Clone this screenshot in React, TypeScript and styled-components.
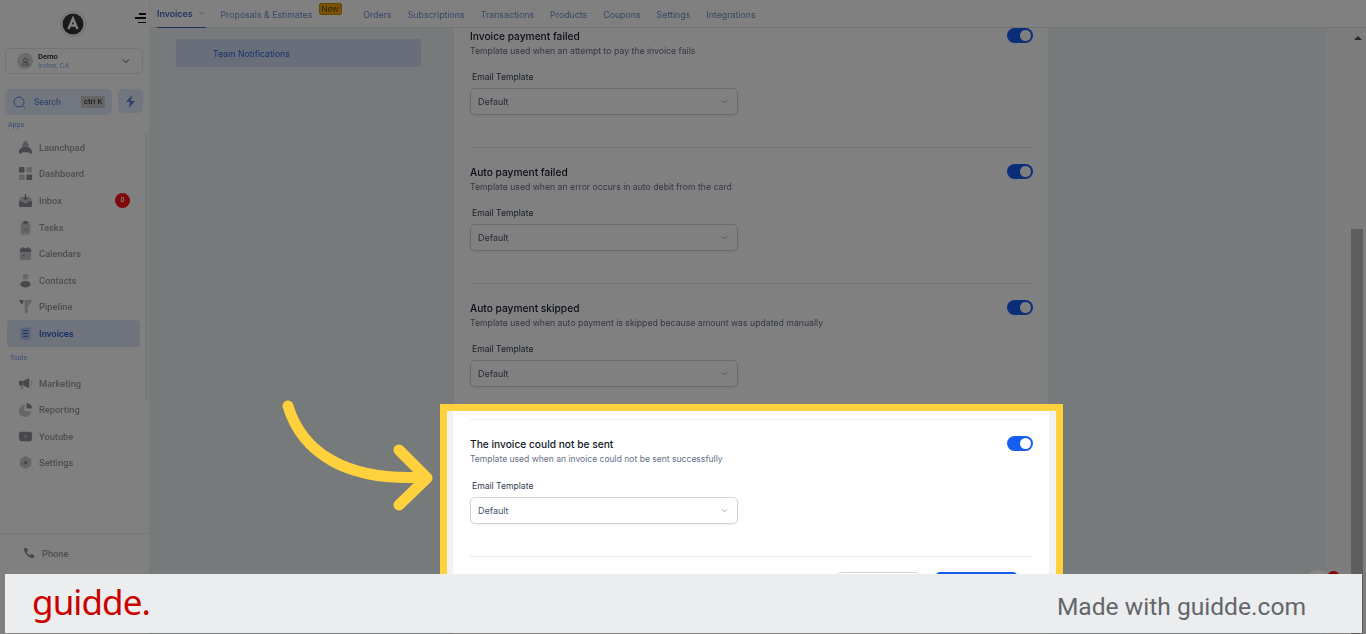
import React from "react";
import styled, { createGlobalStyle } from "styled-components";

const GlobalStyle = createGlobalStyle`
  html, body {
    margin: 0;
    padding: 0;
    background: #808080;
  }
  * {
    box-sizing: border-box;
  }
`;

const Stage = styled.div`
  position: relative;
  width: 1366px;
  height: 634px;
  overflow: hidden;
  font-family: Inter, "Liberation Sans", sans-serif;
`;

const Dimmed = styled.div`
  display: flex;
  width: 100%;
  height: 100%;
  filter: brightness(0.5) blur(0.45px);
`;

/* sidebar */
const Sidebar = styled.aside`
  position: relative;
  flex: 0 0 150px;
  height: 634px;
  display: flex;
  flex-direction: column;
  background: #ffffff;
  border-right: 1px solid #f2f2f2;
  font-family: Roboto, sans-serif;
`;

const SideThumb = styled.div`
  position: absolute;
  top: 134px;
  right: 1px;
  width: 3px;
  height: 266px;
  background: #f0f0f0;
`;

const LogoRow = styled.div`
  position: relative;
  height: 48px;
  display: flex;
  align-items: flex-start;
  justify-content: center;
  padding: 11px 4px 0 0;
`;

const Burger = styled.div`
  position: absolute;
  top: 13px;
  left: 135px;
  width: 11px;
  height: 10px;
  display: flex;
  flex-direction: column;
  align-items: flex-end;
  justify-content: space-between;
  span {
    display: block;
    height: 1.5px;
    background: #111;
  }
  span:nth-child(1) { width: 7px; }
  span:nth-child(2) { width: 11px; }
  span:nth-child(3) { width: 8px; }
`;

const Account = styled.div`
  margin-left: 5px;
  width: 138px;
  height: 26px;
  display: flex;
  align-items: center;
  padding: 0 11px;
  border: 1px solid #e6e6e6;
  border-radius: 5px;
`;

const Avatar = styled.div`
  width: 16px;
  height: 16px;
  border-radius: 50%;
  background: #d6d6d6;
  display: flex;
  align-items: center;
  justify-content: center;
`;

const AccountText = styled.div`
  margin-left: 5px;
  flex: 1;
  font-size: 7.5px;
  line-height: 9.5px;
  color: #111;
  font-weight: 500;
  small {
    display: block;
    font-size: 7.5px;
    font-weight: 400;
    color: #8fb0ee;
  }
`;

const SearchRow = styled.div`
  margin: 15px 0 0 5px;
  display: flex;
  gap: 6px;
`;

const SearchBox = styled.div`
  width: 107px;
  height: 26px;
  display: flex;
  align-items: center;
  padding: 0 7px 0 8px;
  border-radius: 5px;
  background: #e4ecfb;
  color: #6f90e0;
  font-size: 8.7px;
  font-weight: 500;
  span {
    margin-left: 8px;
    flex: 1;
  }
`;

const KeyHint = styled.kbd`
  width: 24px;
  height: 12px;
  background: #c9c9c9;
  color: #111;
  font: 400 8px/12px Roboto, sans-serif;
  text-align: center;
`;

const BoltButton = styled.div`
  width: 25px;
  height: 24px;
  border-radius: 5px;
  background: #e4ecfb;
  display: flex;
  align-items: center;
  justify-content: center;
`;

const GroupLabel = styled.div<{ $indent: number; $top: number }>`
  margin: ${(p) => p.$top}px 0 0 ${(p) => p.$indent}px;
  height: 10px;
  font-size: 7px;
  line-height: 10px;
  color: #6f95e8;
`;

const NavList = styled.nav<{ $top: number }>`
  margin-top: ${(p) => p.$top}px;
  display: flex;
  flex-direction: column;
`;

const NavItem = styled.div<{ $active?: boolean }>`
  position: relative;
  margin-left: 7px;
  width: 133px;
  height: 26.6px;
  display: flex;
  align-items: center;
  padding-left: 11px;
  border-radius: 4px;
  gap: 6px;
  font-size: 9.3px;
  font-weight: 500;
  color: ${(p) => (p.$active ? "#2c58c8" : "#9a9a9a")};
  background: ${(p) => (p.$active ? "#dbe5f8" : "transparent")};
`;

const CountBadge = styled.span`
  position: absolute;
  top: 5.5px;
  right: 10px;
  width: 15px;
  height: 15px;
  border-radius: 50%;
  background: #ff1010;
  color: #fff;
  font-size: 7px;
  line-height: 15px;
  text-align: center;
`;

const SideFooter = styled.div`
  margin-top: auto;
  height: 101px;
  border-top: 1px solid #ededed;
  padding: 9px 0 0 16px;
`;

const PhoneItem = styled.div`
  height: 20px;
  display: flex;
  align-items: center;
  gap: 7px;
  padding-left: 7px;
  font-size: 9.3px;
  font-weight: 500;
  color: #9a9a9a;
`;

/* main */
const Main = styled.div`
  position: relative;
  flex: 1;
  height: 634px;
  overflow: hidden;
  background: #edf3f4;
`;

const TopNav = styled.header`
  position: relative;
  z-index: 2;
  height: 28px;
  display: flex;
  align-items: center;
  padding-left: 7px;
  background: #ffffff;
  border-bottom: 1px solid #e4e4e4;
  font-size: 8.8px;
`;

const TopTab = styled.div<{ $active?: boolean; $after?: number }>`
  position: relative;
  height: 28px;
  display: flex;
  align-items: center;
  gap: 5px;
  padding-top: ${(p) => (p.$active ? 0 : 2)}px;
  margin-right: ${(p) => p.$after ?? 16}px;
  font-weight: ${(p) => (p.$active ? 600 : 400)};
  color: ${(p) => (p.$active ? "#3f68c8" : "#6f8fd0")};
  border-bottom: ${(p) => (p.$active ? "1px solid #3f68c8" : "none")};
`;

const NewTag = styled.span`
  position: absolute;
  top: 3px;
  left: 98px;
  width: 23px;
  height: 12px;
  background: #f2a60c;
  border: 1px solid #c98a06;
  border-radius: 2px;
  color: #5c4300;
  font-size: 8px;
  line-height: 10px;
  text-align: center;
`;

const Content = styled.div`
  display: flex;
  height: 606px;
`;

const SubMenu = styled.div`
  flex: 0 0 303px;
  padding: 11px 0 0 26px;
`;

const SubMenuItem = styled.div`
  width: 245px;
  height: 28px;
  padding-left: 37px;
  background: #cfdef6;
  color: #2f63cf;
  font-size: 8.7px;
  line-height: 30px;
  border-radius: 2px;
`;

const Card = styled.div`
  flex: 0 0 596px;
  margin-top: -16px;
  padding: 0 15px 0 16px;
  background: #ffffff;
  border-left: 1px solid #eceff1;
  border-right: 1px solid #eceff1;
`;

const Rail = styled.div`
  margin-left: auto;
  flex: 0 0 39px;
  display: flex;
  flex-direction: column;
  align-items: flex-end;
  background: #fafafa;
`;

const RailArrow = styled.div`
  margin: 8px 4px 0 0;
  width: 0;
  height: 0;
  border-left: 4px solid transparent;
  border-right: 4px solid transparent;
  border-bottom: 4px solid #505050;
`;

const RailThumb = styled.div`
  margin: 189px 3px 0 0;
  width: 12px;
  flex: 1;
  background: #bdbdbd;
`;

const SectionBox = styled.section`
  position: relative;
  height: 136px;
  padding-top: 17px;
  border-bottom: 1px solid #e8eaed;
`;

const SectionTitle = styled.h3`
  margin: 0;
  font-size: 10.2px;
  line-height: 14px;
  font-weight: 500;
  color: #101828;
`;

const SectionNote = styled.p`
  margin: 2px 0 0;
  font-size: 8.7px;
  line-height: 13px;
  color: #667085;
`;

const FieldLabel = styled.label`
  display: block;
  margin: 13px 0 0 2px;
  font-size: 8.6px;
  line-height: 12px;
  color: #344054;
`;

const Select = styled.div`
  margin-top: 5px;
  width: 268px;
  height: 27px;
  display: flex;
  align-items: center;
  justify-content: space-between;
  padding: 0 8px 0 7px;
  background: #ffffff;
  border: 1px solid #d0d5dd;
  border-radius: 5px;
  box-shadow: 0 1px 2px rgba(16, 24, 40, 0.08);
  color: #475467;
  font-size: 9px;
`;

const Toggle = styled.span`
  position: absolute;
  top: 16px;
  right: 0;
  width: 26px;
  height: 15px;
  border-radius: 8px;
  background: #155eef;
  &::after {
    content: "";
    position: absolute;
    top: 2px;
    right: 2px;
    width: 11px;
    height: 11px;
    border-radius: 50%;
    background: #ffffff;
  }
`;

/* spotlight over the dimmed page */
const Spotlight = styled.div`
  position: absolute;
  top: 404px;
  left: 440px;
  width: 623px;
  height: 182px;
  overflow: hidden;
  border: 7px solid #ffd13d;
  background: #eff3f6;
  padding: 0 7px 0 6px;
`;

const SpotCard = styled.div`
  height: 100%;
  padding: 8px 16px 0 17px;
  background: #ffffff;
`;

const SpotSection = styled(SectionBox)`
  border-top: 1px solid #eeeff1;
  height: 138px;
  ${SectionNote} {
    font-size: 8.55px;
  }
  ${FieldLabel} {
    margin-top: 14px;
  }
`;

const ButtonRow = styled.div`
  display: flex;
  justify-content: flex-end;
  gap: 15px;
  margin: 15px 15px 0 0;
`;

const ActionButton = styled.div<{ $primary?: boolean }>`
  width: ${(p) => (p.$primary ? 83 : 84)}px;
  height: 30px;
  border-radius: 5px;
  background: ${(p) => (p.$primary ? "#155eef" : "#ffffff")};
  border: 1px solid ${(p) => (p.$primary ? "#155eef" : "#d0d5dd")};
`;

const ArrowMark = styled.svg`
  position: absolute;
  top: 395px;
  left: 275px;
`;

const ChatBubble = styled.div`
  position: absolute;
  top: 570px;
  left: 1305px;
  width: 26px;
  height: 26px;
  border-radius: 50%;
  background: #878787;
`;

const ChatDot = styled.div`
  position: absolute;
  top: 571px;
  left: 1327px;
  width: 13px;
  height: 13px;
  border-radius: 50%;
  background: #8b0000;
`;

/* guidde strip */
const Footer = styled.footer`
  position: absolute;
  top: 574px;
  left: 5px;
  width: 1357px;
  height: 59px;
  display: flex;
  align-items: center;
  justify-content: space-between;
  padding: 0 56px 0 27px;
  background: #ecedef;
`;

const Brand = styled.div`
  margin-top: -3px;
  font-family: "Noto Sans", sans-serif;
  font-size: 35px;
  font-weight: 400;
  line-height: 56px;
  letter-spacing: -0.9px;
  color: #cb0000;
`;

const Credit = styled.div`
  margin-top: 6px;
  font-family: Roboto, sans-serif;
  font-size: 24.6px;
  color: #63666a;
`;

const Icon = ({ children, size = 15 }: { children: React.ReactNode; size?: number }) => (
  <svg width={size} height={size} viewBox="0 0 16 16" style={{ flex: "none" }}>
    {children}
  </svg>
);

const DARK = "#8b8f99";
const LIGHT = "#c9cbd0";

const icons: Record<string, React.ReactNode> = {
  Launchpad: (
    <>
      <path d="M8 0.5 C9.5 1.5 11.5 4.5 12 7 H4 C4.5 4.5 6.5 1.5 8 0.5 Z" fill="#aeb0b6" />
      <path d="M1 13 C1 10 4 7 8 7 C12 7 15 10 15 13 C15 15 12.5 15 11 13 H5 C3.5 15 1 15 1 13 Z" fill={DARK} />
    </>
  ),
  Dashboard: (
    <>
      <rect x="1" y="1" width="6" height="6" rx="1" fill={DARK} />
      <rect x="9" y="1" width="6" height="6" rx="1" fill={LIGHT} />
      <rect x="1" y="9" width="6" height="6" rx="1" fill={LIGHT} />
      <rect x="9" y="9" width="6" height="6" rx="1" fill={DARK} />
    </>
  ),
  Inbox: (
    <>
      <path d="M1 8 L3 4 H13 L15 8 V13 A2 2 0 0 1 13 15 H3 A2 2 0 0 1 1 13 Z" fill={LIGHT} />
      <path d="M1 9 H5 L6.5 11 H9.5 L11 9 H15 V13 A2 2 0 0 1 13 15 H3 A2 2 0 0 1 1 13 Z" fill={DARK} />
      <path d="M8 1 V7 M6 5 L8 7 L10 5" stroke={DARK} strokeWidth="1.4" fill="none" />
    </>
  ),
  Tasks: (
    <>
      <rect x="3" y="2.5" width="10" height="13" rx="2" fill={LIGHT} />
      <rect x="5.5" y="1" width="5" height="3" rx="1" fill={DARK} />
      <path d="M6 10 L7.5 11.5 L10 8.5" stroke={DARK} strokeWidth="1" fill="none" />
    </>
  ),
  Calendars: (
    <>
      <rect x="2" y="2.5" width="12" height="12.5" rx="2" fill={LIGHT} />
      <path d="M2 4.5 A2 2 0 0 1 4 2.5 H12 A2 2 0 0 1 14 4.5 V6.5 H2 Z" fill={DARK} />
      <path d="M5 1 V3.5 M11 1 V3.5" stroke={DARK} strokeWidth="1.3" />
      <rect x="5" y="9" width="2" height="2" fill={DARK} />
    </>
  ),
  Contacts: (
    <>
      <circle cx="8" cy="4" r="3" fill={LIGHT} />
      <ellipse cx="8" cy="12" rx="5.5" ry="3.5" fill={DARK} />
    </>
  ),
  Pipeline: (
    <>
      <path d="M7 1 H14 C15 1 15 2 14.5 3 L10.5 8.5 V14 C10.5 15.5 7 15.5 7 14 Z" fill={LIGHT} />
      <path d="M2 1 H6 L5 5.5 H4 L1.5 2.5 C1 2 1.2 1 2 1 Z" fill={DARK} />
    </>
  ),
  Invoices: (
    <>
      <path d="M2.5 1.5 H13.5 V14 L8 15.5 L2.5 14 Z" fill="#b4c9f2" />
      <path d="M5 5 H11 M5 8 H11 M5 11 H11" stroke="#2c58c8" strokeWidth="1.1" />
    </>
  ),
  Marketing: (
    <>
      <rect x="1" y="5" width="5" height="5" rx="1" fill={DARK} />
      <path d="M6 5 L12 2 V13 L6 10 Z" fill={DARK} />
      <path d="M14 5 A4 4 0 0 1 14 10" stroke={LIGHT} strokeWidth="1" fill="none" />
      <rect x="3" y="10" width="2" height="4" fill={LIGHT} />
    </>
  ),
  Reporting: (
    <>
      <path d="M7 3 A6.5 6.5 0 1 0 14 9.5 H7 Z" fill={LIGHT} />
      <path d="M9 1 A6 6 0 0 1 15 7 H9 Z" fill={DARK} />
    </>
  ),
  Youtube: (
    <>
      <rect x="1" y="3" width="14" height="10" rx="2.5" fill={DARK} />
      <path d="M7 6.5 L10 8 L7 9.5 Z" fill={LIGHT} />
    </>
  ),
  Settings: (
    <>
      <path d="M8 1 L14 4.5 V11.5 L8 15 L2 11.5 V4.5 Z" fill={LIGHT} />
      <circle cx="8" cy="8" r="2" fill={DARK} />
    </>
  ),
};

const Chevron = ({ color = "#98a2b3", size = 9 }: { color?: string; size?: number }) => (
  <svg width={size} height={size} viewBox="0 0 10 10">
    <path d="M2 3.5 L5 6.5 L8 3.5" stroke={color} strokeWidth="1" fill="none" />
  </svg>
);

const appItems = ["Launchpad", "Dashboard", "Inbox", "Tasks", "Calendars", "Contacts", "Pipeline", "Invoices"];
const toolItems = ["Marketing", "Reporting", "Youtube", "Settings"];
const tabs = ["Orders", "Subscriptions", "Transactions", "Products", "Coupons", "Settings", "Integrations"];

const sections = [
  { title: "Invoice payment failed", note: "Template used when an attempt to pay the invoice fails" },
  { title: "Auto payment failed", note: "Template used when an error occurs in auto debit from the card" },
  { title: "Auto payment skipped", note: "Template used when auto payment is skipped because amount was updated manually" },
];

const SectionFields = ({ title, note }: { title: string; note: string }) => (
  <>
    <SectionTitle>{title}</SectionTitle>
    <SectionNote>{note}</SectionNote>
    <FieldLabel>Email Template</FieldLabel>
    <Select>
      Default
      <Chevron />
    </Select>
    <Toggle />
  </>
);

export default function App() {
  return (
    <Stage>
      <GlobalStyle />
      <Dimmed>
        <Sidebar>
          <SideThumb />
          <LogoRow>
            <svg width="26" height="26" viewBox="0 0 26 26">
              <circle cx="13" cy="13" r="12.5" fill="#fff" stroke="#ddd" />
              <circle cx="13" cy="13" r="10.5" fill="#333" />
              <path d="M8.5 18 L13 7.5 L17.5 18 M10.5 14.5 H15.5" stroke="#fff" strokeWidth="2.4" fill="none" />
            </svg>
            <Burger>
              <span />
              <span />
              <span />
            </Burger>
          </LogoRow>
          <Account>
            <Avatar>
              <svg width="9" height="9" viewBox="0 0 10 10">
                <circle cx="5" cy="3.5" r="2.2" fill="none" stroke="#777" />
                <path d="M1.5 9 H8.5 L7.5 6.5 H2.5 Z" fill="none" stroke="#777" />
              </svg>
            </Avatar>
            <AccountText>
              Demo
              <small>Irvine, CA</small>
            </AccountText>
            <Chevron color="#555" size={10} />
          </Account>
          <SearchRow>
            <SearchBox>
              <svg width="13" height="13" viewBox="0 0 13 13">
                <circle cx="6" cy="6" r="5" fill="none" stroke="#5a80dc" strokeWidth="1" />
                <path d="M10 10 L12 12" stroke="#5a80dc" />
              </svg>
              <span>Search</span>
              <KeyHint>ctrl K</KeyHint>
            </SearchBox>
            <BoltButton>
              <svg width="11" height="13" viewBox="0 0 11 13">
                <path d="M7 0 L1 7 H5 L4 13 L10 6 H6 Z" fill="#5a80dc" />
              </svg>
            </BoltButton>
          </SearchRow>
          <GroupLabel $indent={8} $top={5}>Apps</GroupLabel>
          <NavList $top={4}>
            {appItems.map((name) => (
              <NavItem key={name} $active={name === "Invoices"}>
                <Icon>{icons[name]}</Icon>
                {name}
                {name === "Inbox" && <CountBadge>0</CountBadge>}
              </NavItem>
            ))}
          </NavList>
          <GroupLabel $indent={10} $top={6}>Tools</GroupLabel>
          <NavList $top={7}>
            {toolItems.map((name) => (
              <NavItem key={name}>
                <Icon>{icons[name]}</Icon>
                {name}
              </NavItem>
            ))}
          </NavList>
          <SideFooter>
            <PhoneItem>
              <svg width="12" height="12" viewBox="0 0 12 12">
                <path d="M2 1 L4 1 L5 4 L3.7 5 C4.3 6.5 5.5 7.7 7 8.3 L8 7 L11 8 V10 C11 10.8 10.3 11.3 9.5 11 C5.5 10.5 1.5 6.5 1 2.5 C0.8 1.7 1.3 1 2 1 Z" fill={DARK} />
              </svg>
              Phone
            </PhoneItem>
          </SideFooter>
        </Sidebar>
        <Main>
          <TopNav>
            <TopTab $active $after={15}>
              Invoices
              <Chevron size={8} />
            </TopTab>
            <TopTab $after={51}>
              Proposals &amp; Estimates
              <NewTag>New</NewTag>
            </TopTab>
            {tabs.map((tab) => (
              <TopTab key={tab}>{tab}</TopTab>
            ))}
          </TopNav>
          <Content>
            <SubMenu>
              <SubMenuItem>Team Notifications</SubMenuItem>
            </SubMenu>
            <Card>
              {sections.map((s) => (
                <SectionBox key={s.title}>
                  <SectionFields title={s.title} note={s.note} />
                </SectionBox>
              ))}
            </Card>
            <Rail>
              <RailArrow />
              <RailThumb />
            </Rail>
          </Content>
        </Main>
      </Dimmed>
      <ArrowMark width="170" height="125" viewBox="275 395 170 125">
        <path
          d="M288 406 C302 452 345 482 426 477 M399 450 L427 478 L399 505"
          fill="none"
          stroke="#ffd13d"
          strokeWidth="11"
          strokeLinecap="round"
          strokeLinejoin="round"
        />
      </ArrowMark>
      <Spotlight>
        <SpotCard>
          <SpotSection>
            <SectionFields title="The invoice could not be sent" note="Template used when an invoice could not be sent successfully" />
          </SpotSection>
          <ButtonRow>
            <ActionButton />
            <ActionButton $primary />
          </ButtonRow>
        </SpotCard>
      </Spotlight>
      <ChatBubble />
      <ChatDot />
      <Footer>
        <Brand>guidde.</Brand>
        <Credit>Made with guidde.com</Credit>
      </Footer>
    </Stage>
  );
}
